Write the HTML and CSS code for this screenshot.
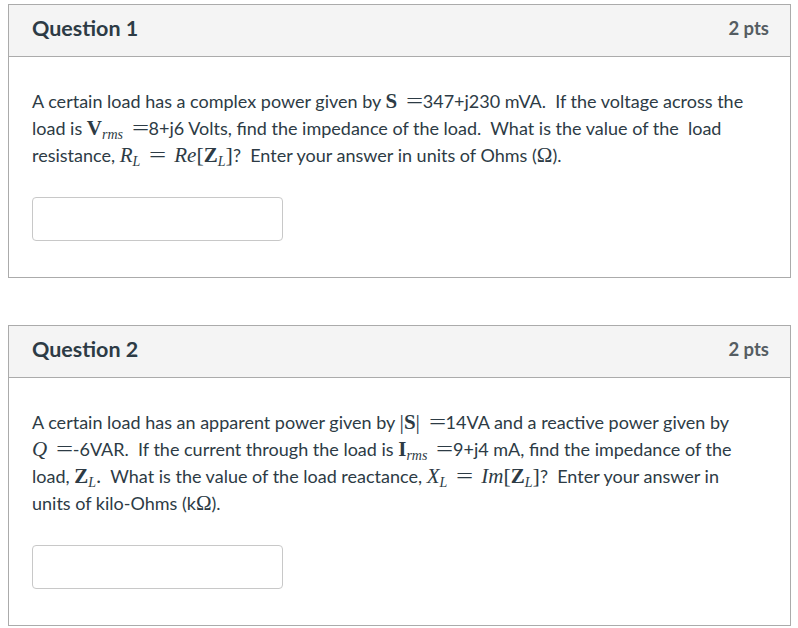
FILE: index.html
```html
<!DOCTYPE html>
<html lang="en">
<head>
<meta charset="utf-8">
<title>Quiz</title>
<link rel="stylesheet" href="styles.css">
</head>
<body>
<div class="quiz">
  <div class="question">
    <div class="q-header">
      <h2 class="q-title">Question 1</h2>
      <span class="pts">2 pts</span>
    </div>
    <div class="q-body">
      <p class="q-text">A certain load has a complex power given by <span class="nw"><span class="m mb">S</span> <span class="m eq">=</span>347+j230</span> mVA.&nbsp; If the voltage across the load is <span class="nw"><span class="m mb">V</span><sub class="m mi">rms</sub> <span class="m eq">=</span>8+j6</span> Volts, find the impedance of the load.&nbsp; What is the value of the&nbsp; load resistance, <span class="nw"><span class="m mi">R</span><sub class="m mi">L</sub><span class="m eq rel">=</span><span class="m mi">Re</span><span class="m br">[</span><span class="m mb">Z</span><sub class="m mi">L</sub><span class="m br">]</span>?</span>&nbsp; Enter your answer in units of Ohms (<span class="m">Ω</span>).</p>
      <input class="answer" type="text" aria-label="Answer">
    </div>
  </div>

  <div class="question">
    <div class="q-header">
      <h2 class="q-title">Question 2</h2>
      <span class="pts">2 pts</span>
    </div>
    <div class="q-body">
      <p class="q-text">A certain load has an apparent power given by <span class="nw"><span class="m bar">|</span><span class="m mb">S</span><span class="m bar">|</span> <span class="m eq">=</span>14VA</span> and a reactive power given by <span class="nw"><span class="m mi">Q</span> <span class="m eq">=</span>-6VAR.</span>&nbsp; If the current through the load is <span class="nw"><span class="m mb">I</span><sub class="m mi">rms</sub> <span class="m eq">=</span>9+j4</span> mA, find the impedance of the load, <span class="nw"><span class="m mb">Z</span><sub class="m mi">L</sub><span class="m">.</span></span>&nbsp; What is the value of the load reactance, <span class="nw"><span class="m mi">X</span><sub class="m mi">L</sub><span class="m eq rel">=</span><span class="m mi">Im</span><span class="m br">[</span><span class="m mb">Z</span><sub class="m mi">L</sub><span class="m br">]</span>?</span>&nbsp; Enter your answer in units of kilo-Ohms (k<span class="m">Ω</span>).</p>
      <input class="answer" type="text" aria-label="Answer">
    </div>
  </div>
</div>
</body>
</html>
```

FILE: styles.css
```css
html, body {
  margin: 0;
  padding: 0;
  background: #ffffff;
}

body {
  font-family: Lato, "Open Sans", "Liberation Sans", sans-serif;
  color: #2d3b45;
}

.quiz {
  padding: 4px 7px 0 8px;
}

.question {
  border: 1px solid #ababab;
  background: #ffffff;
}

.question + .question {
  margin-top: 47px;
}

.q-header {
  display: flex;
  align-items: center;
  justify-content: space-between;
  box-sizing: border-box;
  height: 52px;
  padding: 0 21px 6px 23px;
  background: #f4f4f4;
  border-bottom: 1px solid #ababab;
}

.q-title {
  margin: 0;
  font-size: 21.5px;
  font-weight: 700;
  color: #2d3b45;
}

.pts {
  font-size: 18.5px;
  font-weight: 700;
  color: #555d62;
}

.q-body {
  padding: 31px 40px 36px 23px;
}

.q-text {
  margin: 0 0 28px 0;
  font-size: 18px;
  line-height: 27px;
}

.nw {
  white-space: nowrap;
}

.m {
  font-family: "Liberation Serif", "DejaVu Serif", serif;
  font-size: 21px;
  line-height: 1;
}

.mb {
  font-weight: 700;
}

.mi {
  font-style: italic;
}

.br {
  font-size: 22px;
}

.bar {
  font-size: 22px;
}

.eq {
  display: inline-block;
  width: 17px;
  margin-left: 4px;
  text-align: center;
  transform: scaleX(1.45);
}

.rel {
  margin-left: 9px;
  margin-right: 8px;
}

sub.m {
  font-size: 14px;
  line-height: 0;
  vertical-align: -4px;
}

.answer {
  display: block;
  box-sizing: border-box;
  width: 251px;
  height: 44px;
  margin: 0;
  border: 1px solid #c8c8c8;
  border-radius: 4px;
  background: #ffffff;
}
```
